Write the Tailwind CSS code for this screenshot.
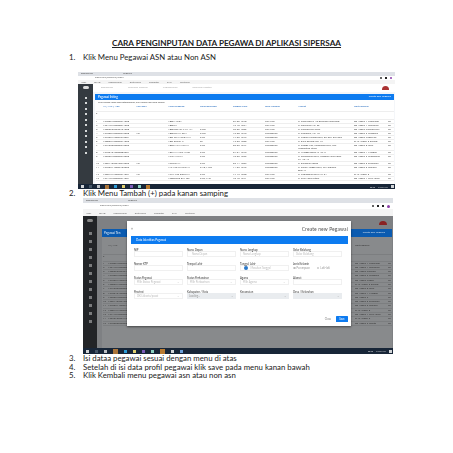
<!DOCTYPE html>
<html><head><meta charset="utf-8"><script src="https://cdn.jsdelivr.net/npm/@tailwindcss/browser@4"></script></head>
<body class="bg-white">
<main class="w-[453px] h-[453px] overflow-hidden bg-white pt-[39px] antialiased font-['Lato','Liberation_Sans',sans-serif] text-[#222] text-[7.8px] leading-[8px]">
<h1 class="ml-[112px] font-bold underline text-[8.2px] leading-[9px] whitespace-nowrap">CARA PENGINPUTAN DATA PEGAWA DI APLIKASI SIPERSAA</h1>
<div class="ml-[69px] mt-[5px] flex gap-[7px] whitespace-nowrap"><span class="w-[7px]">1.</span><span>Klik Menu Pegawai ASN atau Non ASN</span></div>

<section class="ml-[78px] mt-[11px] w-[317px] h-[117px] flex flex-col overflow-hidden bg-white blur-[0.35px]">
  <div class="h-[4px] bg-[#dee1e6] flex items-center gap-[30px] pl-[3px] text-[2.5px] text-[#555]"><span>Dashboard</span><span>Pegawai</span></div>
  <div class="h-[4px] bg-white flex items-center pl-[5px] pr-[3px] text-[2.5px] text-[#666] justify-between"><span class="pl-[12px]">sipersaa.id/pegawai/index</span><span class="flex gap-[3px]"><i class="size-[2px] bg-[#666]"></i><i class="size-[2px] bg-[#222]"></i><i class="size-[2px] rounded-full bg-[#8b3fa8]"></i></span></div>
  <div class="h-[4px] bg-[#f4f4f4] flex items-center gap-[8px] pl-[3px] text-[2.3px] text-[#666]"><span>Apps</span><span>Bio ID</span><span>Kepegawaian</span><span>Data Siswa</span><span>Computer</span><span>SIAP</span><span>Peraturan</span></div>
  <div class="flex flex-1 min-h-0">
    <aside class="w-[15px] bg-[#343a40] flex flex-col items-center gap-[3.5px] pt-[2px]">
      <i class="h-[3px] w-[6px] rounded-full bg-[#ddd] mb-[4px]"></i><i class="size-[2px] bg-white/80"></i><i class="size-[2px] bg-white/80"></i><i class="size-[2px] bg-white/80"></i><i class="size-[2px] bg-white/80"></i><i class="size-[2px] bg-white/80"></i><i class="size-[2px] bg-white/80"></i><i class="size-[2px] bg-white/80"></i><i class="size-[2px] bg-white/80"></i><i class="size-[2px] bg-white/80"></i><i class="size-[2px] bg-white/80"></i><i class="size-[2px] bg-white/80"></i>
    </aside>
    <div class="flex-1 min-w-0 bg-[#f4f6f9] flex flex-col">
      <div class="h-[8px] bg-white flex items-center justify-between pl-[8px] pr-[6px] text-[2.5px] text-[#aaa]"><span class="flex gap-[15px]"><span>Dashboard</span><span>Referensi Pegawai</span><span>Kepegawaian</span><span>Referensi Jabatan</span></span><i class="w-[7px] h-[4px] rounded-t-full bg-[#a33]"></i></div>
      <div class="ml-[2px] mr-[1px] mt-[2px] h-[6px] bg-[#0d7bf0] flex items-center justify-between px-[3px] text-[3px] text-white"><b class="font-semibold">Pegawai listing</b><span class="text-[2.5px]">Create new Pegawai</span></div>
      <div class="ml-[2px] mr-[1px] flex-1 bg-white pl-[1px] text-[2.5px] text-[#444] overflow-hidden">
        <p class="h-[5px] flex items-center pl-[2px]">Pilih kolom yang akan ditampilkan, klik Kolom lalu pilih kolom</p>
        <table class="w-full table-fixed border-collapse [&_td]:align-top [&_td]:h-[3px] [&_td]:leading-[3px] [&_td]:overflow-hidden [&_td]:whitespace-nowrap [&_tr]:border-b [&_tr]:border-[#eee]">
          <colgroup><col class="w-[7px]"><col class="w-[33px]"><col class="w-[32px]"><col class="w-[32px]"><col class="w-[33px]"><col class="w-[32px]"><col class="w-[33px]"><col class="w-[56px]"><col class="w-[34px]"><col></colgroup>
          <tr class="text-[#2a6fc0] font-semibold [&_td]:h-[6px]"><td></td><td>NI / NIK / NRP</td><td>Nip Lama</td><td>Nama Lengkap</td><td>Gelar Belakang</td><td>Tanggal Lahir</td><td>Jenis Kelamin</td><td>Alamat</td><td>Unit Pegawai</td><td></td></tr>
          <tr class="[&_td]:h-[8px]"><td>#</td><td></td><td></td><td></td><td></td><td></td><td></td><td></td><td></td><td></td></tr>
          <tr><td>1</td><td>197806102005011003</td><td></td><td>ABDI MUSA</td><td></td><td>07-06-1978</td><td>Laki-Laki</td><td>Jl. Pamulang III No.38 Bumi Pamulang</td><td>SD Negeri 1 Pamulang</td><td>Re</td></tr>
          <tr><td>2</td><td>196410152008011003</td><td></td><td>ABDUH</td><td></td><td>15-10-1964</td><td>Laki-Laki</td><td>Jl. Cibereum No. 26</td><td>SD Negeri 1 Cibereum</td><td>Re</td></tr>
          <tr><td>3</td><td>198606252020121003</td><td></td><td>ABDURRACHMAN M</td><td>S.Pd.I</td><td>25-06-1986</td><td>Laki-Laki</td><td>Jl. Gunung Sari Raya</td><td>SD Negeri Gunung Sari</td><td>Re</td></tr>
          <tr><td>4</td><td>197308152005012003</td><td>NIP</td><td>ABDULLAH ZEN</td><td>S.Pd.I</td><td>15-08-1973</td><td>Perempuan</td><td>Jl. Cempaka, No. 10</td><td>SD Negeri 2 Cempaka</td><td>Re</td></tr>
          <tr><td>5</td><td>197205172007012004</td><td></td><td>ADE IRMA SURYANI</td><td>S.Pd</td><td>17-05-1972</td><td>Perempuan</td><td>Jl. Kebon Kacang Raya, RT. 001 RW 002</td><td>SD Negeri Kebon 09</td><td>Re</td></tr>
          <tr><td>6</td><td>198003122009011002</td><td></td><td>ADE SUTISNA</td><td>ST</td><td>12-03-1980</td><td>Laki-Laki</td><td>Jl. Raya Serang Km. 12</td><td>SMP Negeri 5 Serang</td><td>Re</td></tr>
          <tr class="[&_td]:h-[6px]"><td>7</td><td>197709092006042002</td><td></td><td>ADELA SYAHRANI</td><td>S.Pd</td><td>09-09-1977</td><td>Perempuan</td><td>Jl. Pinggir Kali, Kampung Jawa, Kec.<br>Kecamatan Utara</td><td>SD Negeri 3 Jawa</td><td>Re</td></tr>
          <tr><td>8</td><td>197301012000032001</td><td></td><td>ADIJAYANTO HADI</td><td>S.Pd</td><td>01-01-1973</td><td>Perempuan</td><td>Jl. Mangga Besar III No. 9</td><td>SD Negeri 4 Mangga</td><td>Re</td></tr>
          <tr class="[&_td]:h-[6px]"><td>9</td><td>196905102005012005</td><td></td><td>AFIFAH ZAIN</td><td>S.Pd</td><td>10-05-1969</td><td>Perempuan</td><td>Jl. Pendidikan Raya, Komplek Guru Blok<br>C4 No. 17</td><td>SD Negeri 2 Pendidikan</td><td>Re</td></tr>
          <tr><td>10</td><td>198211022010012002</td><td>NIP</td><td>AGUSTINA</td><td>S.Pd</td><td>02-11-1982</td><td>Perempuan</td><td>Jl. Sukamaju Indah</td><td>SD Negeri 5 Sukamaju</td><td>Re</td></tr>
          <tr class="[&_td]:h-[6px]"><td>11</td><td>197502142003122002</td><td></td><td>AHMAD SYARIFAH</td><td>S.Ag, M.Pd</td><td>14-02-1975</td><td>Perempuan</td><td>Jl. Pasar Minggu Raya, Kel. Cibubur<br>Blok A1</td><td>SD Negeri 6 Cibubur</td><td>Re</td></tr>
          <tr><td>12</td><td>196812172002011001</td><td>NIP</td><td>AKHMAD RIDWAN</td><td>S.Pd</td><td>17-12-1968</td><td>Laki-Laki</td><td>Jl. Kebagusan Raya No. 21</td><td>SMP Negeri 3</td><td>Re</td></tr>
          <tr><td>13</td><td>197110182005011004</td><td></td><td>ALBERTUS DANIEL</td><td>S.Pd, M.Si</td><td>18-10-1971</td><td>Laki-Laki</td><td>Jl. Pulo Asem Utara</td><td>SD Negeri 1 Pulo Asem</td><td>Re</td></tr>
        </table>
      </div>
    </div>
  </div>
  <div class="h-[5px] bg-[#182638] flex items-center justify-between pl-[3px] pr-[1px]"><span class="flex gap-[5px] items-center"><i class="size-[3px] bg-white/80"></i><i class="size-[3px] bg-[#456]"></i><i class="size-[3px] bg-white/70"></i><i class="size-[4px] bg-[#a9743a]"></i><i class="size-[3px] bg-[#2c9bd6]"></i><i class="size-[3px] bg-[#e0d070]"></i><i class="size-[3px] bg-[#7a5ab8]"></i><i class="size-[3px] bg-[#8ad0c0]"></i><i class="size-[4px] bg-[#b87a30]"></i></span><span class="flex gap-[3px] items-center text-[2.3px] text-white"><span>ENG</span><span>11:24 AM</span><i class="size-[3px] bg-white/80"></i></span></div>
</section>

<div class="ml-[69px] flex gap-[7px] whitespace-nowrap"><span class="w-[7px]">2.</span><span>Klik Menu Tambah (+) pada kanan samping</span></div>

<section class="ml-[83px] mt-[1px] w-[310px] h-[156px] relative flex flex-col overflow-hidden bg-white blur-[0.35px]">
  <div class="h-[5px] bg-[#dee1e6] flex items-center gap-[30px] pl-[3px] text-[2.5px] text-[#555]"><span>Dashboard</span><span>Pegawai</span></div>
  <div class="h-[6px] bg-white flex items-center pl-[5px] pr-[3px] text-[2.5px] text-[#666] justify-between"><span class="pl-[12px]">sipersaa.id/pegawai/index</span><span class="flex gap-[3px]"><i class="size-[2px] bg-[#666]"></i><i class="size-[2px] bg-[#222]"></i><i class="size-[2px] bg-[#222]"></i><i class="size-[3px] rounded-full bg-[#8b3fa8]"></i></span></div>
  <div class="h-[7px] bg-[#f4f4f4] flex items-center gap-[8px] pl-[3px] text-[2.3px] text-[#666]"><span>Apps</span><span>Bio ID</span><span>Kepegawaian</span><span>Data Siswa</span><span>Computer</span><span>SIAP</span><span>Peraturan</span></div>
  <div class="flex flex-1 min-h-0">
    <aside class="w-[14px] bg-[#222427] flex flex-col items-center gap-[5px] pt-[3px]">
      <i class="h-[3px] w-[6px] rounded-full bg-[#888] mb-[5px]"></i><i class="size-[3px] bg-white/40"></i><i class="size-[3px] bg-white/40"></i><i class="size-[3px] bg-white/40"></i><i class="size-[3px] bg-white/40"></i><i class="size-[3px] bg-white/40"></i><i class="size-[3px] bg-white/40"></i><i class="size-[3px] bg-white/40"></i><i class="size-[3px] bg-white/40"></i><i class="size-[3px] bg-white/40"></i><i class="size-[3px] bg-white/40"></i><i class="size-[3px] bg-white/40"></i><i class="size-[3px] bg-white/40"></i>
    </aside>
    <div class="flex-1 min-w-0 bg-[#7e8083] flex flex-col">
      <div class="h-[13px] flex items-center justify-end pr-[6px]"><i class="w-[8px] h-[4px] rounded-t-full bg-[#8a2222]"></i></div>
      <div class="ml-[5px] mr-[1px] h-[8px] bg-[#0b5bb0] flex items-center justify-between px-[2px] text-[3px] text-white/80"><b class="font-semibold">Pegawai Ten</b><span class="text-[2.5px] pr-[5px]">Create new Pegawai</span></div>
      <div class="ml-[5px] mr-[1px] flex-1 bg-[#888a8c] pl-[1px] text-[2.5px] text-[#333] overflow-hidden">
        <table class="w-full table-fixed border-collapse mt-[7px] [&_td]:align-top [&_td]:h-[4.3px] [&_td]:leading-[3px] [&_td]:overflow-hidden [&_td]:whitespace-nowrap [&_tr]:border-b [&_tr]:border-[#7c7e80]">
          <colgroup><col class="w-[5px]"><col class="w-[30px]"><col class="w-[30px]"><col class="w-[30px]"><col class="w-[30px]"><col class="w-[30px]"><col class="w-[30px]"><col class="w-[67px]"><col class="w-[33px]"><col></colgroup>
          <tr class="[&_td]:h-[10px]"><td></td><td>NI / NIK</td><td>Nip Lama</td><td></td><td></td><td></td><td></td><td></td><td>Unit Pegawai</td><td></td></tr>
          <tr class="[&_td]:h-[7px]"><td>#</td><td></td><td></td><td></td><td></td><td></td><td></td><td></td><td></td><td></td></tr>
          <tr><td>1</td><td>197806102005011003</td><td></td><td></td><td></td><td></td><td></td><td></td><td>SD Negeri 1 Pamulang</td><td>Re</td></tr>
          <tr><td>2</td><td>196410152008011003</td><td></td><td></td><td></td><td></td><td></td><td></td><td>SD Negeri 1 Cibereum</td><td>Re</td></tr>
          <tr><td>3</td><td>198606252020121003</td><td></td><td></td><td></td><td></td><td></td><td></td><td>SD Negeri Gunung</td><td>Re</td></tr>
          <tr><td>4</td><td>197308152005012003</td><td></td><td></td><td></td><td></td><td></td><td></td><td>SD Negeri 2 Cempaka</td><td>Re</td></tr>
          <tr><td>5</td><td>197205172007012004</td><td></td><td></td><td></td><td></td><td></td><td></td><td>SD Negeri Kebon</td><td>Re</td></tr>
          <tr><td>6</td><td>198003122009011002</td><td></td><td></td><td></td><td></td><td></td><td></td><td>SMP Negeri 5 Serang</td><td>Re</td></tr>
          <tr><td>7</td><td>197709092006042002</td><td></td><td></td><td></td><td></td><td></td><td></td><td>SD Negeri 3 Jawa</td><td>Re</td></tr>
          <tr><td>8</td><td>197301012000032001</td><td></td><td></td><td></td><td></td><td></td><td></td><td>SD Negeri 4 Mangga</td><td>Re</td></tr>
          <tr><td>9</td><td>196905102005012005</td><td></td><td></td><td></td><td></td><td></td><td></td><td>SD Negeri 2</td><td>Re</td></tr>
          <tr><td>10</td><td>198211022010012002</td><td></td><td></td><td></td><td></td><td></td><td></td><td>SD Negeri 5 Sukamaju</td><td>Re</td></tr>
          <tr><td>11</td><td>197502142003122002</td><td></td><td></td><td></td><td></td><td></td><td></td><td>SD Negeri 6 Cibubur</td><td>Re</td></tr>
          <tr><td>12</td><td>198812172002011001</td><td></td><td></td><td></td><td></td><td></td><td></td><td>SMP Negeri 3</td><td>Re</td></tr>
          <tr><td>13</td><td>197110182005011004</td><td></td><td></td><td></td><td></td><td></td><td></td><td>SD Negeri 1 Pulo Asem</td><td>Re</td></tr>
          <tr><td>14</td><td>198407262011011003</td><td></td><td>ALDI RAHMAN</td><td>ST</td><td>26-07-1984</td><td>Laki-Laki</td><td>Jl. Raya Lenteng Agung No. 88</td><td>SMP Negeri 9</td><td>Re</td></tr>
          <tr><td>15</td><td>197906062006042004</td><td>NIP</td><td>ALFIAH</td><td>S.Pd</td><td>06-06-1979</td><td>Perempuan</td><td>Jl. Cipete Dalam No. 2</td><td>SD Negeri 2 Cipete</td><td>Re</td></tr>
        </table>
      </div>
    </div>
  </div>
  <div class="h-[6px] bg-[#182638] flex items-center justify-between pl-[3px] pr-[1px]"><span class="flex gap-[6px] items-center"><i class="size-[3px] bg-white/80"></i><i class="size-[3px] bg-[#456]"></i><i class="size-[3px] bg-white/70"></i><i class="size-[5px] bg-[#a9743a]"></i><i class="size-[3px] bg-[#2c9bd6]"></i><i class="size-[3px] bg-[#e0d070]"></i><i class="size-[3px] bg-[#7a5ab8]"></i><i class="size-[3px] bg-[#8ad0c0]"></i><i class="size-[5px] bg-[#b87a30]"></i><i class="size-[3px] bg-white/80"></i><i class="size-[3px] bg-[#6a9fd8]"></i></span><span class="flex gap-[3px] items-center text-[2.3px] text-white"><span>ENG</span><span>11:24 AM</span><i class="size-[3px] bg-white/80"></i></span></div>

  <div class="absolute left-[44px] top-[23px] w-[224px] h-[105px] bg-white shadow-[0_1px_2px_rgba(0,0,0,0.5)] flex flex-col pl-[4px] pr-[3px] text-[2.7px] text-[#555]">
    <div class="h-[15px] flex items-center justify-between shrink-0"><span class="text-[3.5px]">×</span><span class="text-[5px] tracking-[0.1px]">Create new Pegawai</span></div>
    <div class="h-[8px] bg-[#0d7bf0] text-white text-[3px] flex items-center pl-[5px] shrink-0">Data Identitas Pegawai</div>
    <div class="grid grid-cols-4 gap-x-[4px] gap-y-[1px] pl-[3px] pr-[6px] pt-[2px] whitespace-nowrap">
      <div class="h-[13px]"><b class="font-semibold block h-[5px]">NIP</b><i class="block h-[6px] border border-[#f0f0f0]"></i></div>
      <div class="h-[13px]"><b class="font-semibold block h-[5px]">Nama Depan</b><span class="block h-[6px] border border-[#f0f0f0] pl-[4px] text-[#bbb] leading-[5px]">Nama Depan</span></div>
      <div class="h-[13px]"><b class="font-semibold block h-[5px]">Nama Lengkap</b><span class="block h-[6px] border border-[#f0f0f0] pl-[2px] text-[#bbb] leading-[5px]">Nama Lengkap</span></div>
      <div class="h-[13px]"><b class="font-semibold block h-[5px]">Gelar Belakang</b><span class="block h-[6px] border border-[#f0f0f0] pl-[2px] text-[#bbb] leading-[5px]">Gelar Belakang</span></div>
      <div class="h-[13px]"><b class="font-semibold block h-[5px]">Nomor KTP</b><i class="block h-[6px] border border-[#f0f0f0]"></i></div>
      <div class="h-[13px]"><b class="font-semibold block h-[5px]">Tempat Lahir</b><i class="block h-[6px] border border-[#f0f0f0]"></i></div>
      <div class="h-[13px]"><b class="font-semibold block h-[5px]">Tanggal Lahir</b><span class="flex items-center gap-[3px] h-[6px] border border-[#f0f0f0] text-[#bbb]"><i class="size-[3.5px] ml-[3px] rounded-full bg-[#2a78c8]"></i>Masukan Tanggal</span></div>
      <div class="h-[13px]"><b class="font-semibold block h-[5px]">Jenis Kelamin</b><span class="flex items-center gap-[1px] h-[6px] text-[#999]"><i class="size-[2.5px] rounded-full border border-[#bbb]"></i>Perempuan<i class="size-[2.5px] rounded-full border border-[#bbb] ml-[6px]"></i>Laki-laki</span></div>
      <div class="h-[13px]"><b class="font-semibold block h-[5px]">Status Pegawai</b><span class="flex justify-between items-center h-[6px] border border-[#f0f0f0] px-[2px] text-[#bbb]">Pilih Status Pegawai<span>⌄</span></span></div>
      <div class="h-[13px]"><b class="font-semibold block h-[5px]">Status Perkawinan</b><span class="flex justify-between items-center h-[6px] border border-[#f0f0f0] px-[2px] text-[#bbb]">Pilih Perkawinan<span>⌄</span></span></div>
      <div class="h-[13px]"><b class="font-semibold block h-[5px]">Agama</b><span class="flex justify-between items-center h-[6px] border border-[#f0f0f0] px-[2px] text-[#bbb]">Pilih Agama<span>⌄</span></span></div>
      <div class="h-[13px]"><b class="font-semibold block h-[5px]">Alamat</b><i class="block h-[6px] border border-[#f0f0f0]"></i></div>
      <div class="h-[13px]"><b class="font-semibold block h-[5px]">Provinsi</b><span class="flex justify-between items-center h-[6px] border border-[#f0f0f0] px-[2px] text-[#bbb]">DKI Jakarta/pusat<span>⌄</span></span></div>
      <div class="h-[13px]"><b class="font-semibold block h-[5px]">Kabupaten / Kota</b><span class="flex justify-between items-center h-[6px] bg-[#e9ecef] px-[2px] text-[#999]">Loading...<span>⌄</span></span></div>
      <div class="h-[13px]"><b class="font-semibold block h-[5px]">Kecamatan</b><span class="flex justify-end items-center h-[6px] bg-[#e9ecef] px-[2px] text-[#999]">⌄</span></div>
      <div class="h-[13px]"><b class="font-semibold block h-[5px]">Desa / Kelurahan</b><span class="flex justify-end items-center h-[6px] bg-[#e9ecef] px-[2px] text-[#999]">⌄</span></div>
    </div>
    <div class="flex justify-end items-center gap-[3px] mt-auto mb-[4px]"><span class="w-[10px] h-[6px] flex items-center justify-center text-[#888]">Close</span><span class="w-[12px] h-[6px] bg-[#0d7bf0] text-white flex items-center justify-center rounded-[0.5px]">Save</span></div>
  </div>
</section>

<ol class="ml-[69px] whitespace-nowrap">
  <li class="flex gap-[7px] h-[8.5px]"><span class="w-[7px]">3.</span><span>Isi dataa pegawai sesuai dengan menu di atas</span></li>
  <li class="flex gap-[7px] h-[8.5px]"><span class="w-[7px]">4.</span><span>Setelah di isi data profil pegawai klik save pada menu kanan bawah</span></li>
  <li class="flex gap-[7px] h-[8.5px]"><span class="w-[7px]">5.</span><span>Klik Kembali menu pegawai asn atau non asn</span></li>
</ol>
</main>
</body></html>
